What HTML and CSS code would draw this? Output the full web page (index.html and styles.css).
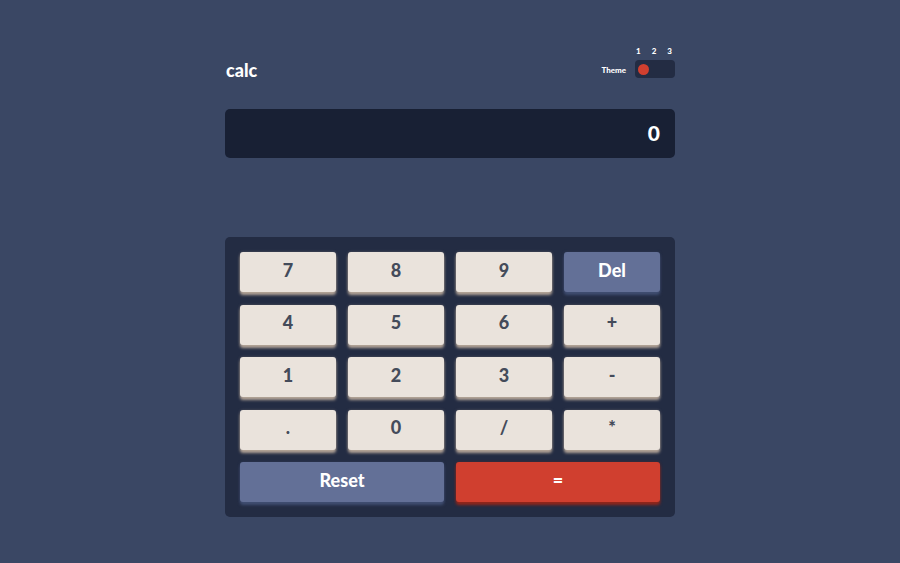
FILE: index.html
```html
<!DOCTYPE html>
<html lang="en">
<head>
<meta charset="utf-8">
<title>Calculator</title>
<link rel="stylesheet" href="styles.css">
</head>
<body>
<main class="app">
  <header class="header">
    <h1 class="logo">calc</h1>
    <div class="theme">
      <span class="theme-label">Theme</span>
      <div class="theme-switch">
        <div class="theme-nums"><span>1</span><span>2</span><span>3</span></div>
        <div class="toggle"><span class="dot"></span></div>
      </div>
    </div>
  </header>
  <section class="display">0</section>
  <section class="keypad">
    <button class="key">7</button>
    <button class="key">8</button>
    <button class="key">9</button>
    <button class="key key-alt">Del</button>
    <button class="key">4</button>
    <button class="key">5</button>
    <button class="key">6</button>
    <button class="key">+</button>
    <button class="key">1</button>
    <button class="key">2</button>
    <button class="key">3</button>
    <button class="key">-</button>
    <button class="key">.</button>
    <button class="key">0</button>
    <button class="key">/</button>
    <button class="key">*</button>
    <button class="key key-alt key-wide">Reset</button>
    <button class="key key-eq key-wide">=</button>
  </section>
</main>
</body>
</html>
```
FILE: styles.css
```css
* { box-sizing: border-box; }
body {
  margin: 0;
  background: #3a4764;
  font-family: "Lato", "Open Sans", sans-serif;
  font-weight: 700;
  color: #ffffff;
}
.app {
  width: 450px;
  margin: 0 auto;
  padding-top: 46px;
}
.header {
  display: flex;
  justify-content: space-between;
  align-items: flex-end;
}
.logo {
  margin: 0 0 -2px 1px;
  font-size: 18px;
  line-height: 20px;
  font-weight: 900;
}
.theme {
  display: flex;
  align-items: flex-end;
  gap: 9px;
}
.theme-label {
  font-size: 8px;
  font-weight: 900;
  line-height: 15px;
}
.theme-switch {
  display: flex;
  flex-direction: column;
  gap: 3px;
  width: 40px;
}
.theme-nums {
  display: flex;
  justify-content: space-between;
  padding: 0 3px 0 1px;
  font-size: 8px;
  font-weight: 900;
  line-height: 11px;
}
.toggle {
  height: 18px;
  border-radius: 4px;
  background: #232c43;
  display: flex;
  align-items: center;
  padding: 0 3px;
}
.dot {
  width: 11px;
  height: 11px;
  border-radius: 50%;
  background: #d03f2f;
}
.display {
  margin-top: 31px;
  height: 49px;
  border-radius: 5px;
  background: #182034;
  display: flex;
  align-items: center;
  justify-content: flex-end;
  padding: 0 15px 3px 0;
  font-size: 21px;
  font-weight: 900;
}
.keypad {
  margin-top: 79px;
  background: #232c43;
  border-radius: 5px;
  padding: 15px;
  display: grid;
  grid-template-columns: repeat(4, 96px);
  grid-auto-rows: 40px;
  column-gap: 12px;
  row-gap: 12.5px;
}
.key {
  border: none;
  border-radius: 3px;
  background: #eae3dc;
  color: #444b5a;
  font-family: inherit;
  font-weight: 900;
  font-size: 18px;
  padding: 0 0 5px;
  box-shadow: 0 3px 3px #b3a497, 0 0 3px rgba(179, 164, 151, 0.35);
  cursor: pointer;
}
.key-alt {
  background: #637097;
  color: #ffffff;
  box-shadow: 0 3px 3px #404e72, 0 0 3px rgba(64, 78, 114, 0.4);
}
.key-eq {
  background: #d03f2f;
  color: #ffffff;
  box-shadow: 0 3px 3px #93261a, 0 0 3px rgba(147, 38, 26, 0.4);
}
.key-wide {
  grid-column: span 2;
}
```
